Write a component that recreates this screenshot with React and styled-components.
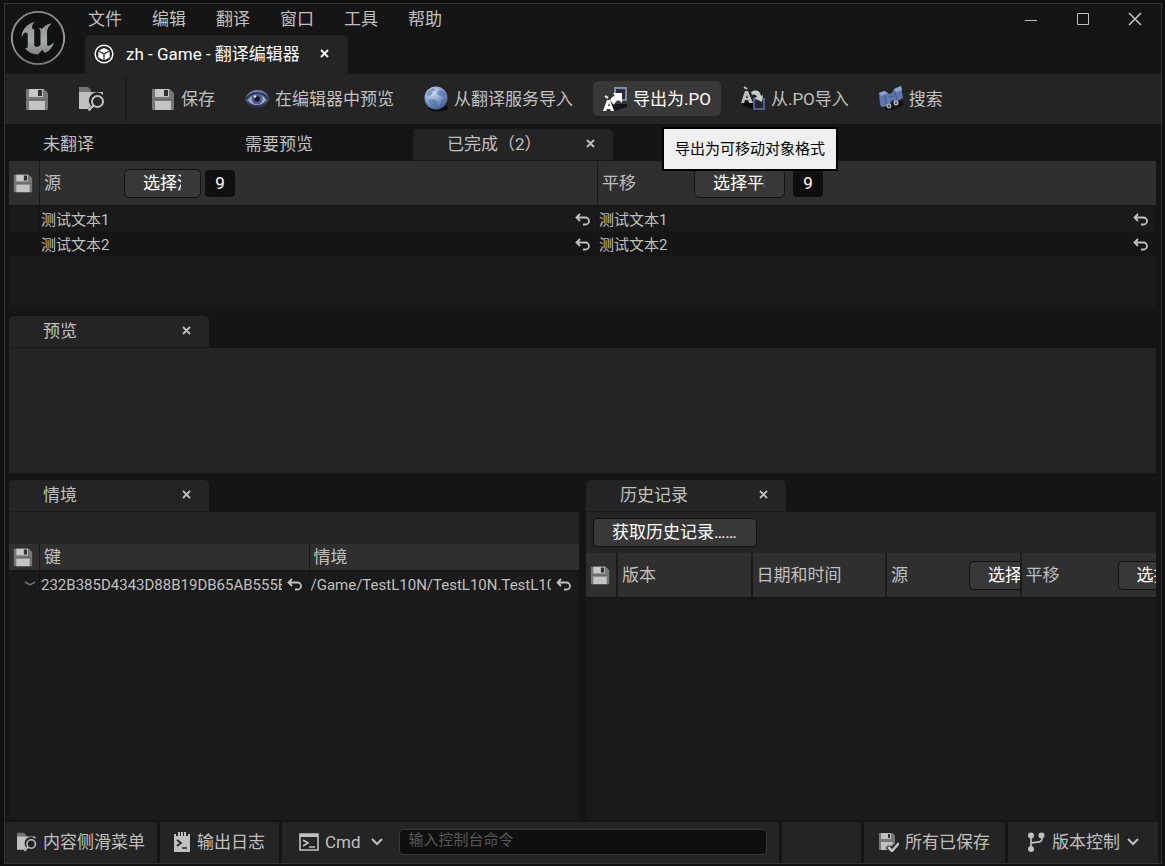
import React from "react";
import styled, { createGlobalStyle, css } from "styled-components";
import { SiUnrealengine } from "react-icons/si";

const GlobalStyle = createGlobalStyle`
  * { box-sizing: border-box; }
  body {
    margin: 0;
    background: #101010;
    color: #c0c0c0;
    font: 17px/24px Roboto, "Noto Sans CJK SC", sans-serif;
  }
  button, input { font: inherit; color: inherit; }
  button { background: none; border: 0; padding: 0; margin: 0; white-space: nowrap; }
  svg { display: block; flex: none; }
`;

const Window = styled.div`
  display: flex;
  flex-direction: column;
  min-height: calc(100vh - 5px);
  margin: 3px 3px 2px 4px;
  border: 1px solid #333;
  background: #151515;
`;

const TitleBar = styled.header`
  display: flex;
  height: 70px;
`;

const LogoBox = styled.div`
  display: grid;
  place-items: center;
  flex: none;
  width: 66px;
  margin-right: 14px;
  padding-bottom: 2px;
`;

const TitleColumn = styled.div`
  flex: 1;
  min-width: 0;
  display: flex;
  flex-direction: column;
`;

const MenuRow = styled.div`
  display: flex;
  align-items: center;
  justify-content: space-between;
  height: 31px;
  padding-bottom: 2px;
`;

const MenuBar = styled.nav`
  display: flex;
  gap: 30px;
  padding-left: 3px;
`;

const WindowControls = styled.div`
  display: flex;
  gap: 38px;
  padding-right: 19px;
`;

const TabStrip = styled.div`
  display: flex;
  align-items: flex-end;
  gap: 2px;
  padding: 0 5px 0 4px;
  height: ${(p) => p.$height || 32}px;
`;

const TabFrame = styled.div`
  display: flex;
  align-items: center;
  justify-content: space-between;
  width: 200px;
  height: 32px;
  padding: 0 18px 2px 34px;
  border-radius: 5px 5px 0 0;
  background: ${(p) => (p.$active ? "#242424" : "transparent")};
  border-bottom: 1px solid ${(p) => (p.$active ? "#1a1a1a" : "transparent")};
`;

const AppTab = styled.div`
  display: flex;
  align-items: center;
  align-self: flex-start;
  gap: 12px;
  min-width: 263px;
  height: 39px;
  padding: 0 19px 2px 9px;
  border-radius: 5px 5px 0 0;
  background: #242424;
  color: #fff;
  > button:last-child { margin-left: auto; }
`;

const Toolbar = styled.div`
  display: flex;
  align-items: center;
  gap: 10px;
  height: 50px;
  padding: 0 10px 1px;
  background: #242424;
`;

const ToolButton = styled.button`
  position: relative;
  display: flex;
  align-items: center;
  gap: 6px;
  height: 35px;
  padding: 0 10px;
  border-radius: 5px;
  ${(p) => p.$hovered && css`background: #383838; color: #fff;`}
`;

const ToolDivider = styled.div`
  width: 2px;
  height: 46px;
  margin-right: 4px;
  background: #1b1b1b;
`;

const Tooltip = styled.span`
  position: absolute;
  z-index: 2;
  top: 46px;
  left: 69px;
  padding: 10px 11px;
  border: 2px solid #000;
  background: #efefef;
  color: #000;
  font-size: 15px;
  line-height: 20px;
`;

const Workspace = styled.main`
  flex: 1;
  display: flex;
  flex-direction: column;
  gap: 7px;
  padding-bottom: 2px;
`;

const Panel = styled.section`
  display: flex;
  flex-direction: column;
  min-width: 0;
  ${(p) => p.$grow && css`flex: 1;`}
`;

const Split = styled.div`
  flex: 1;
  display: flex;
  gap: 7px;
  padding: 0 5px 0 4px;
  > section > div:first-child { padding: 0; }
`;

const PanelBody = styled.div`
  flex: 1;
  min-height: ${(p) => p.$min || 0}px;
  margin: ${(p) => (p.$inset ? "0 5px 0 4px" : "0")};
  background: ${(p) => (p.$raised ? "#242424" : "#1a1a1a")};
`;

const PanelTools = styled.div`
  display: flex;
  align-items: center;
  height: ${(p) => p.$height}px;
  padding: 0 7px;
  background: #242424;
`;

const DataTable = styled.table`
  width: 100%;
  table-layout: fixed;
  border-collapse: separate;
  border-spacing: 0;
`;

const HeadCell = styled.th`
  height: ${(p) => p.$height || 46}px;
  padding: 0 0 0 4px;
  overflow: hidden;
  background: #2f2f2f;
  border-right: ${(p) => p.$rule || 1}px solid #1a1a1a;
  border-bottom: 2px solid #171717;
  font-weight: 400;
  text-align: left;
  white-space: nowrap;
  &:last-child { border-right: 0; }
`;

const HeadContent = styled.div`
  display: flex;
  align-items: center;
  overflow: hidden;
`;

const HeadLabel = styled.span`
  flex: none;
  width: ${(p) => p.$width}px;
`;

const BodyRow = styled.tr`
  background: ${(p) => (p.$alt ? "#151515" : "#1a1a1a")};
`;

const BodyCell = styled.td`
  height: 25px;
  padding: ${(p) => (p.$expander ? "0 3px 0 0" : "2px 7px 0 1px")};
  font-size: 15px;
  line-height: 20px;
  border-right: 1px solid #151515;
  border-bottom: 1px solid #171717;
  > button { display: block; margin-left: auto; }
`;

const CellContent = styled.div`
  display: flex;
  align-items: center;
  gap: 5px;
`;

const CellText = styled.span`
  flex: 1;
  min-width: 0;
  overflow: hidden;
  white-space: nowrap;
`;

const PushButton = styled.button`
  flex: none;
  width: ${(p) => (p.$width ? p.$width + "px" : "auto")};
  height: 29px;
  padding: 0 19px 0 18px;
  border: 1px solid #121212;
  border-radius: 5px;
  background: #383838;
  color: #fff;
  line-height: 27px;
  text-align: left;
  ${(p) => p.$cut && css`
    flex: 1;
    min-width: 0;
    padding-right: 0;
    border-right: 0;
    border-radius: 5px 0 0 5px;
  `}
`;

const ClipText = styled.span`
  display: block;
  overflow: hidden;
`;

const Count = styled.output`
  flex: none;
  width: 30px;
  height: 27px;
  margin-left: ${(p) => p.$gap}px;
  border-radius: 4px;
  background: #0f0f0f;
  color: #fff;
  line-height: 27px;
  text-align: center;
`;

const StatusBar = styled.footer`
  display: flex;
  gap: 3px;
  height: 41px;
  margin-right: 3px;
`;

const StatusGroup = styled.div`
  display: flex;
  align-items: center;
  background: #242424;
  padding: 0 ${(p) => p.$pad || 12}px 2px;
  ${(p) => p.$grow && css`flex: 1; gap: 10px; min-width: 0; padding: 0 12px 2px 17px;`}
  ${(p) => p.$blank && css`width: 79px;`}
`;

const StatusButton = styled.button`
  display: flex;
  align-items: center;
  gap: ${(p) => p.$gap || 6}px;
`;

const CommandInput = styled.input`
  flex: 1;
  min-width: 0;
  height: 26px;
  margin-left: 6px;
  padding: 0 9px 4px;
  border: 1px solid #383838;
  border-radius: 4px;
  background: #0f0f0f;
  font-size: 15px;
  &::placeholder { color: #575757; opacity: 1; }
`;

const SaveIcon = ({ size = 24 }) => (
  <svg width={size} height={size} viewBox="0 0 24 24">
    <path d="M1 2h18l4 4v17H1z" fill="#777" />
    <path d="M4 2h14v8H4z" fill="#c8c8c8" />
    <path d="M13 3h4v6h-4z" fill="#303030" />
    <path d="M4 14h16v9H4z" fill="#c4c4c4" />
    <path d="M1 12h22v1H1z" fill="#686868" />
  </svg>
);

const BrowseIcon = ({ size = 26 }) => (
  <svg width={size} height={size} viewBox="0 0 26 26">
    <path d="M0 1h9l3 3v3H0z" fill="#737373" />
    <path d="M0 6h24v3a8 8 0 0 0-12 11l-3 3H0z" fill="#c0c0c0" />
    <circle cx="18.500" cy="15.500" r="5.500" fill="none" stroke="#c0c0c0" strokeWidth="2" />
    <path d="m14.500 19.500-5 5" stroke="#c0c0c0" strokeWidth="2.400" />
  </svg>
);

const CubeIcon = () => (
  <svg width="20" height="20" viewBox="0 0 20 20">
    <circle cx="10" cy="10" r="8.800" fill="none" stroke="#fff" strokeWidth="1.500" />
    <path d="m10 4 5.200 2.500L10 9.200 4.800 6.500zM4.300 7.500l5.100 2.700v5.900l-5.100-2.700zm11.400 0-5.100 2.700v5.900l5.100-2.700z" fill="#fff" />
  </svg>
);

const EyeIcon = () => (
  <svg width="24" height="24" viewBox="0 0 24 24">
    <defs>
      <linearGradient id="lid" x1="0" y1="0" x2="0" y2="1">
        <stop offset="0" stopColor="#7383b5" />
        <stop offset="1" stopColor="#252b47" />
      </linearGradient>
    </defs>
    <path d="M0 13C2 5 8 3 13 3s10 3 11 9c-2 6-7 9-12 9S3 18 0 13z" fill="url(#lid)" />
    <path d="M3 13c3-4 6-5 9-5s7 1 9 5c-3 4-6 5-9 5s-7-1-9-5z" fill="#a9aebd" />
    <circle cx="12" cy="12" r="5.500" fill="#4b5e98" />
    <circle cx="12" cy="12" r="2.800" fill="#11131d" />
    <circle cx="10" cy="9.500" r="1.300" fill="#eef" />
    <path d="M1 12C5 7 8 6 12 6s8 1 11 6" fill="none" stroke="#252c49" strokeWidth="1.400" />
  </svg>
);

const GlobeIcon = () => (
  <svg width="24" height="24" viewBox="0 0 24 24" overflow="visible">
    <defs>
      <radialGradient id="sea" cx=".35" cy=".25" r=".8">
        <stop offset="0" stopColor="#d0def1" />
        <stop offset=".5" stopColor="#8ba5cf" />
        <stop offset="1" stopColor="#405995" />
      </radialGradient>
    </defs>
    <ellipse cx="14" cy="20.500" rx="10" ry="4" fill="#0b0b0b" />
    <circle cx="12" cy="11" r="11.500" fill="url(#sea)" />
    <path d="m2 7 3-4 4-2 3 2-3 1-1 3-3 2zm12-3 4-1 3 4-1 3-4-1-3-2zM4 13l6-1 4 3-2 5-4-1-2-3zm13 0 4-1-2 6-3 1z" fill="#4e69a8" opacity=".55" />
  </svg>
);

const ExportIcon = () => (
  <svg width="24" height="24" viewBox="0 0 24 24" overflow="visible">
    <path d="M8 17h16v3l-12 4z" fill="#151515" />
    <path d="M12 1h11v12H12z" fill="#292c38" stroke="#8088b0" strokeWidth="2" />
    <path d="M10 6h9v10l-3-3c-2 0-4 2-5 5l-4-5c1-2 3-4 5-4z" fill="#fff" />
    <path fillRule="evenodd" d="m0 24 4-11h3l4 11H8l-1-2H4l-1 2zm5-5h2l-1-3z" fill="#fff" />
    <path d="m2 9 3 2" stroke="#fff" strokeWidth="2" />
  </svg>
);

const ImportIcon = () => (
  <svg width="24" height="24" viewBox="0 0 24 24" overflow="visible">
    <path d="M1 18 8 14l8 3v7z" fill="#0c0c0c" />
    <path d="M13 12h10v10H13z" fill="#202530" stroke="#515e92" strokeWidth="2" />
    <path fillRule="evenodd" d="m0 16 4-12h3l5 12H8l-1-3H4l-1 3zm5-5h2L6 8z" fill="#bebebe" />
    <path d="m3 0 3 2" stroke="#bebebe" strokeWidth="2" />
    <path d="M10 5c6-3 9-1 10 4l2-1-1 7-8-4 3-1c-1-2-2-3-5-2z" fill="#c7cec8" />
  </svg>
);

const BinocularIcon = () => (
  <svg width="24" height="24" viewBox="0 0 24 24" overflow="visible">
    <path d="m4 18 19-4 2 4-12 5H7z" fill="#101010" />
    <path d="m0 6 6-2 4 3 3-1 2-4 7-3 2 12-7 4-4-2-3 6-7 1-2-2z" fill="#5f76ae" />
    <path d="m0 6 5-2 4 2-7 3zm15-4 7-3 1 4-6 2z" fill="#8ea3cf" />
    <path d="m6 9 1 8m9-12 2 9M10 10l5-1" stroke="#46598b" strokeWidth="1.200" />
    <circle cx="10" cy="19" r="2.500" fill="#9daaa9" />
    <circle cx="17" cy="16" r="2.500" fill="#adb8b7" />
    <circle cx="10" cy="19" r="1" fill="#333" />
    <circle cx="17" cy="16" r="1" fill="#333" />
  </svg>
);

const ResetIcon = () => (
  <svg width="15" height="14" viewBox="0 0 15 14" fill="none" stroke="#c0c0c0" strokeWidth="1.800">
    <path d="M5 1 1.500 4.500 5 8M2 4.500h8.500a3.500 3.500 0 0 1 0 7H8" />
  </svg>
);

const Chevron = () => (
  <svg width="12" height="8" viewBox="0 0 12 8" fill="none" stroke="#c0c0c0" strokeWidth="2">
    <path d="m1 1 5 5 5-5" />
  </svg>
);

const ExpanderIcon = () => (
  <svg width="12" height="6" viewBox="0 0 12 6" fill="none" stroke="#707070" strokeWidth="1.500">
    <path d="m1 1 5 3 5-3" />
  </svg>
);

const CloseIcon = () => (
  <svg width="9" height="9" viewBox="0 0 9 9" stroke="currentColor" strokeWidth="1.800">
    <path d="m1 1 7 7M8 1 1 8" />
  </svg>
);

const LogIcon = () => (
  <svg width="16" height="20" viewBox="0 0 16 20">
    <path d="M0 2h2v2h2V0h2v4h1V0h2v4h1V0h2v4h2V2h2v18H0z" fill="#c0c0c0" />
    <path d="m3 8 4 3-4 3m5 2h5" fill="none" stroke="#242424" strokeWidth="1.700" />
  </svg>
);

const TerminalIcon = () => (
  <svg width="20" height="18" viewBox="0 0 20 18">
    <path d="M1 1h18v16H1z" fill="none" stroke="#c0c0c0" strokeWidth="1.600" />
    <path d="M1 1h18v3H1z" fill="#c0c0c0" />
    <path d="m4 7 5 3-5 3m6 1h6" fill="none" stroke="#c0c0c0" strokeWidth="1.600" />
  </svg>
);

const SavedIcon = () => (
  <svg width="20" height="20" viewBox="0 0 20 20">
    <path d="M0 1h14l2 3v8l-4 3-2-2-3 3 2 2H0z" fill="#777" />
    <path d="M2 1h10v6H2zm0 9h12v2l-3 2-2-1-3 3 2 2H2z" fill="#c0c0c0" />
    <path d="M9 2h2v4H9z" fill="#333" />
    <path d="m9 15 4 4 7-8" fill="none" stroke="#c0c0c0" strokeWidth="2.600" />
  </svg>
);

const BranchIcon = () => (
  <svg width="18" height="20" viewBox="0 0 18 20">
    <path d="M4 3v14M15 3v4c0 3-3 3-11 4" fill="none" stroke="#c0c0c0" strokeWidth="1.700" />
    <g fill="#c0c0c0">
      <circle cx="4" cy="3.500" r="3" />
      <circle cx="14.500" cy="3.500" r="3" />
      <circle cx="4" cy="17" r="3" />
    </g>
  </svg>
);

const Logo = () => (
  <svg width="54" height="54" viewBox="0 0 54 54">
    <defs>
      <linearGradient id="steel" x1="0" y1="0" x2="0" y2="1">
        <stop offset="0" stopColor="#858585" />
        <stop offset=".55" stopColor="#a5a9a8" />
        <stop offset="1" stopColor="#686868" />
      </linearGradient>
    </defs>
    <circle cx="27" cy="27" r="26" fill="#101212" stroke="#888" strokeWidth="1.600" />
    <SiUnrealengine size={54} fill="url(#steel)" />
  </svg>
);

const Tab = ({ label, active = true }) => (
  <TabFrame $active={active}>
    <button>{label}</button>
    {active && <button aria-label={"关闭" + label}><CloseIcon /></button>}
  </TabFrame>
);

const SaveHead = ({ height, rule }) => (
  <HeadCell $height={height} $rule={rule} aria-label="保存"><SaveIcon size={20} /></HeadCell>
);

const CultureHead = ({ label, labelWidth, action, width, count, gap, rule, cut }) => (
  <HeadCell $rule={rule}>
    <HeadContent>
      <HeadLabel $width={labelWidth}>{label}</HeadLabel>
      <PushButton $width={width} $cut={cut}><ClipText>{action}</ClipText></PushButton>
      {count && <Count $gap={gap}>{count}</Count>}
    </HeadContent>
  </HeadCell>
);

const ValueCell = ({ children }) => (
  <BodyCell>
    <CellContent>
      <CellText>{children}</CellText>
      <button aria-label="还原"><ResetIcon /></button>
    </CellContent>
  </BodyCell>
);

const menus = ["文件", "编辑", "翻译", "窗口", "工具", "帮助"];
const translations = ["测试文本1", "测试文本2"];

export default function App() {
  return (
    <>
      <GlobalStyle />
      <Window>
        <TitleBar>
          <LogoBox><Logo /></LogoBox>
          <TitleColumn>
            <MenuRow>
              <MenuBar>{menus.map((m) => <button key={m}>{m}</button>)}</MenuBar>
              <WindowControls>
                <button aria-label="最小化"><svg width="14" height="14" stroke="#c0c0c0"><path d="M1 8.500h12" /></svg></button>
                <button aria-label="最大化"><svg width="14" height="14" fill="none" stroke="#c0c0c0"><path d="M1.500 1.500h11v11h-11z" /></svg></button>
                <button aria-label="关闭"><svg width="14" height="14" stroke="#c0c0c0" strokeWidth="1.600"><path d="m1 1 12 12M13 1 1 13" /></svg></button>
              </WindowControls>
            </MenuRow>
            <AppTab>
              <CubeIcon />
              <button>zh - Game - 翻译编辑器</button>
              <button aria-label="关闭标签"><CloseIcon /></button>
            </AppTab>
          </TitleColumn>
        </TitleBar>

        <Toolbar>
          <ToolButton aria-label="保存资产"><SaveIcon /></ToolButton>
          <ToolButton aria-label="浏览"><BrowseIcon /></ToolButton>
          <ToolDivider />
          <ToolButton><SaveIcon />保存</ToolButton>
          <ToolButton><EyeIcon />在编辑器中预览</ToolButton>
          <ToolButton><GlobeIcon />从翻译服务导入</ToolButton>
          <ToolButton $hovered aria-describedby="export-tip">
            <ExportIcon />导出为.PO
            <Tooltip id="export-tip" role="tooltip">导出为可移动对象格式</Tooltip>
          </ToolButton>
          <ToolButton><ImportIcon />从.PO导入</ToolButton>
          <ToolButton><BinocularIcon />搜索</ToolButton>
        </Toolbar>

        <Workspace>
          <Panel>
            <TabStrip $height={37}>
              <Tab label="未翻译" active={false} />
              <Tab label="需要预览" active={false} />
              <Tab label="已完成（2）" />
            </TabStrip>
            <PanelBody $inset $min={148}>
              <DataTable>
                <colgroup><col width="31" /><col /><col /></colgroup>
                <thead>
                  <tr>
                    <SaveHead />
                    <CultureHead label="源" labelWidth={80} action="选择源" width={77} count="9" gap={4} />
                    <CultureHead label="平移" labelWidth={92} action="选择平移" width={91} count="9" gap={8} />
                  </tr>
                </thead>
                <tbody>
                  {translations.map((text, i) => (
                    <BodyRow key={text} $alt={i % 2 === 1}>
                      <BodyCell />
                      <ValueCell>{text}</ValueCell>
                      <ValueCell>{text}</ValueCell>
                    </BodyRow>
                  ))}
                </tbody>
              </DataTable>
            </PanelBody>
          </Panel>

          <Panel>
            <TabStrip><Tab label="预览" /></TabStrip>
            <PanelBody $inset $min={125} $raised />
          </Panel>

          <Split>
            <Panel $grow>
              <TabStrip><Tab label="情境" /></TabStrip>
              <PanelTools $height={32} />
              <PanelBody>
                <DataTable>
                  <colgroup><col width="31" /><col /><col /></colgroup>
                  <thead>
                    <tr>
                      <SaveHead height={28} />
                      <HeadCell $height={28}>键</HeadCell>
                      <HeadCell $height={28}>情境</HeadCell>
                    </tr>
                  </thead>
                  <tbody>
                    <BodyRow>
                      <BodyCell $expander><button aria-label="展开"><ExpanderIcon /></button></BodyCell>
                      <ValueCell>232B385D4343D88B19DB65AB555EB</ValueCell>
                      <ValueCell>/Game/TestL10N/TestL10N.TestL10N</ValueCell>
                    </BodyRow>
                  </tbody>
                </DataTable>
              </PanelBody>
            </Panel>

            <Panel $grow>
              <TabStrip><Tab label="历史记录" /></TabStrip>
              <PanelTools $height={41}><PushButton>获取历史记录……</PushButton></PanelTools>
              <PanelBody>
                <DataTable>
                  <colgroup><col width="32" /><col /><col /><col /><col /></colgroup>
                  <thead>
                    <tr>
                      <SaveHead rule={2} />
                      <HeadCell $rule={2}>版本</HeadCell>
                      <HeadCell $rule={2}>日期和时间</HeadCell>
                      <CultureHead rule={2} label="源" labelWidth={78} action="选择源" cut />
                      <CultureHead rule={2} label="平移" labelWidth={92} action="选择平移" cut />
                    </tr>
                  </thead>
                </DataTable>
              </PanelBody>
            </Panel>
          </Split>
        </Workspace>

        <StatusBar>
          <StatusGroup><StatusButton><BrowseIcon size={20} />内容侧滑菜单</StatusButton></StatusGroup>
          <StatusGroup $pad={14}><StatusButton $gap={7}><LogIcon />输出日志</StatusButton></StatusGroup>
          <StatusGroup $grow>
            <StatusButton><TerminalIcon />Cmd</StatusButton>
            <button aria-label="选择命令类型"><Chevron /></button>
            <CommandInput aria-label="控制台命令" placeholder="输入控制台命令" />
          </StatusGroup>
          <StatusGroup $blank />
          <StatusGroup $pad={15}><StatusButton><SavedIcon />所有已保存</StatusButton></StatusGroup>
          <StatusGroup $pad={19}><StatusButton $gap={7}><BranchIcon />版本控制<Chevron /></StatusButton></StatusGroup>
        </StatusBar>
      </Window>
    </>
  );
}
